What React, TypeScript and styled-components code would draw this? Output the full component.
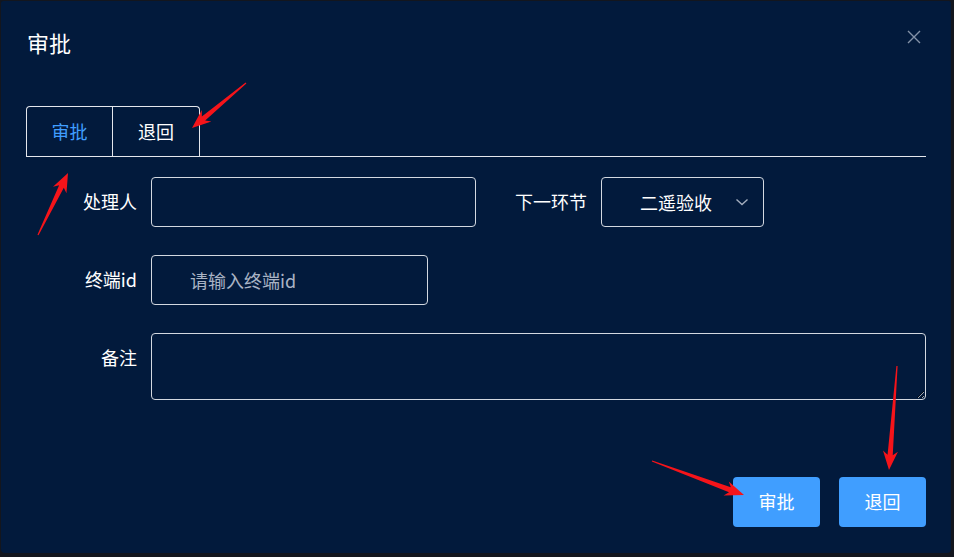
import React, { ReactElement } from 'react'
import styled, { createGlobalStyle } from 'styled-components'

const GlobalStyle = createGlobalStyle`
  html, body {
    margin: 0;
    padding: 0;
    background: #13161e;
  }
  body {
    font-family: 'Noto Sans CJK SC', 'Liberation Sans', sans-serif;
  }
`

const Page = styled.div`
  position: relative;
  width: 954px;
  height: 557px;
  overflow: hidden;
`

const Dialog = styled.div`
  position: relative;
  margin: 1px 0 0 1px;
  width: 950px;
  height: 552px;
  box-sizing: border-box;
  background: #021a3c;
  border-radius: 2px 2px 4px 4px;
  display: flex;
  flex-direction: column;
`

const Header = styled.div`
  display: flex;
  justify-content: space-between;
  align-items: center;
  padding: 26px 26px 2px 26px;
  height: 30px;
`

const Title = styled.div`
  color: #ffffff;
  font-size: 22px;
  line-height: 30px;
`

const CloseButton = styled.button`
  background: none;
  border: none;
  padding: 0;
  width: 16px;
  height: 16px;
  margin: -10px 3px 0 0;
  cursor: pointer;
  display: flex;
  align-items: center;
  justify-content: center;
`

const Body = styled.div`
  padding: 47px 25px 0 25px;
`

const TabHeader = styled.div`
  border-bottom: 1px solid #e4e7ed;
  display: flex;
`

const TabNav = styled.div`
  display: flex;
  border: 1px solid #e4e7ed;
  border-bottom: none;
  border-radius: 4px 4px 0 0;
`

const Tab = styled.div<{ $active?: boolean }>`
  width: 85px;
  height: 49px;
  line-height: 48px;
  text-align: center;
  font-size: 18px;
  color: ${(p) => (p.$active ? '#409eff' : '#ffffff')};
  & + & {
    border-left: 1px solid #e4e7ed;
    width: 86px;
  }
`

const Form = styled.div`
  padding-top: 20px;
  display: flex;
  flex-direction: column;
  gap: 28px;
`

const Row = styled.div`
  display: flex;
`

const Item = styled.div<{ $grow?: boolean }>`
  display: flex;
  align-items: flex-start;
  flex: ${(p) => (p.$grow ? 1 : '0 0 auto')};
`

const Label = styled.label`
  width: 125px;
  box-sizing: border-box;
  padding-right: 14px;
  text-align: right;
  color: #ffffff;
  font-size: 18px;
  line-height: 49px;
  flex: 0 0 auto;
`

const Input = styled.input<{ $w: number }>`
  width: ${(p) => p.$w}px;
  height: 50px;
  box-sizing: border-box;
  background: transparent;
  border: 1px solid #d3d8e0;
  border-radius: 4px;
  padding: 0 14px 0 38px;
  color: #ffffff;
  font-size: 18px;
  font-family: inherit;
  outline: none;
  &::placeholder {
    color: #a9b3c4;
  }
`

const Select = styled.div`
  width: 163px;
  height: 50px;
  box-sizing: border-box;
  border: 1px solid #d3d8e0;
  border-radius: 4px;
  padding: 0 14px 0 38px;
  display: flex;
  align-items: center;
  justify-content: space-between;
  color: #ffffff;
  font-size: 18px;
`

const TextArea = styled.textarea`
  flex: 1;
  height: 67px;
  box-sizing: border-box;
  background: transparent;
  border: 1px solid #d3d8e0;
  border-radius: 4px;
  color: #ffffff;
  font-size: 18px;
  font-family: inherit;
  padding: 6px 14px;
  outline: none;
  margin: 0;
  display: block;
`

const Footer = styled.div`
  display: flex;
  justify-content: flex-end;
  gap: 19px;
  padding: 77px 25px 0 0;
`

const Button = styled.button`
  width: 87px;
  height: 50px;
  border: none;
  border-radius: 4px;
  background: #409eff;
  color: #ffffff;
  font-size: 18px;
  font-family: inherit;
  padding: 0 0 3px 0;
  cursor: pointer;
`

const Overlay = styled.svg`
  position: absolute;
  left: 0;
  top: 0;
  pointer-events: none;
`

const arrows: [number, number, number, number][] = [
  [246, 83, 192, 128],
  [38, 235, 68, 173],
  [652, 461, 744, 495],
  [897, 366, 889, 470],
]

const Arrow = ({ a }: { a: [number, number, number, number] }): ReactElement => {
  const [x1, y1, x2, y2] = a
  const len = Math.hypot(x2 - x1, y2 - y1)
  const ang = (Math.atan2(y2 - y1, x2 - x1) * 180) / Math.PI
  const pts = [
    [0, -0.6],
    [len - 15, -2.6],
    [len - 19, -7.5],
    [len, 0],
    [len - 19, 7.5],
    [len - 15, 2.6],
    [0, 0.6],
  ]
    .map((p) => p.join(','))
    .join(' ')
  return (
    <g transform={`translate(${x1} ${y1}) rotate(${ang})`}>
      <polygon points={pts} fill="#f5141a" />
    </g>
  )
}

export default function App(): ReactElement {
  return (
    <Page>
      <GlobalStyle />
      <Dialog>
        <Header>
          <Title>审批</Title>
          <CloseButton aria-label="close">
            <svg width="14" height="14" viewBox="0 0 14 14">
              <path d="M1 1 L13 13 M13 1 L1 13" stroke="#8391a7" strokeWidth="1.4" />
            </svg>
          </CloseButton>
        </Header>
        <Body>
          <TabHeader>
            <TabNav>
              <Tab $active>审批</Tab>
              <Tab>退回</Tab>
            </TabNav>
          </TabHeader>
          <Form>
            <Row>
              <Item>
                <Label>处理人</Label>
                <Input $w={325} />
              </Item>
              <Item>
                <Label>下一环节</Label>
                <Select>
                  <span>二遥验收</span>
                  <svg width="14" height="10" viewBox="0 0 14 10">
                    <path d="M1.5 2.5 L7 7.5 L12.5 2.5" fill="none" stroke="#a3adbd" strokeWidth="1.4" />
                  </svg>
                </Select>
              </Item>
            </Row>
            <Row>
              <Item>
                <Label>终端id</Label>
                <Input $w={277} placeholder="请输入终端id" />
              </Item>
            </Row>
            <Row>
              <Item $grow>
                <Label>备注</Label>
                <TextArea />
              </Item>
            </Row>
          </Form>
        </Body>
        <Footer>
          <Button>审批</Button>
          <Button>退回</Button>
        </Footer>
      </Dialog>
      <Overlay width="954" height="557" viewBox="0 0 954 557">
        {arrows.map((a, i) => (
          <Arrow key={i} a={a} />
        ))}
      </Overlay>
    </Page>
  )
}
